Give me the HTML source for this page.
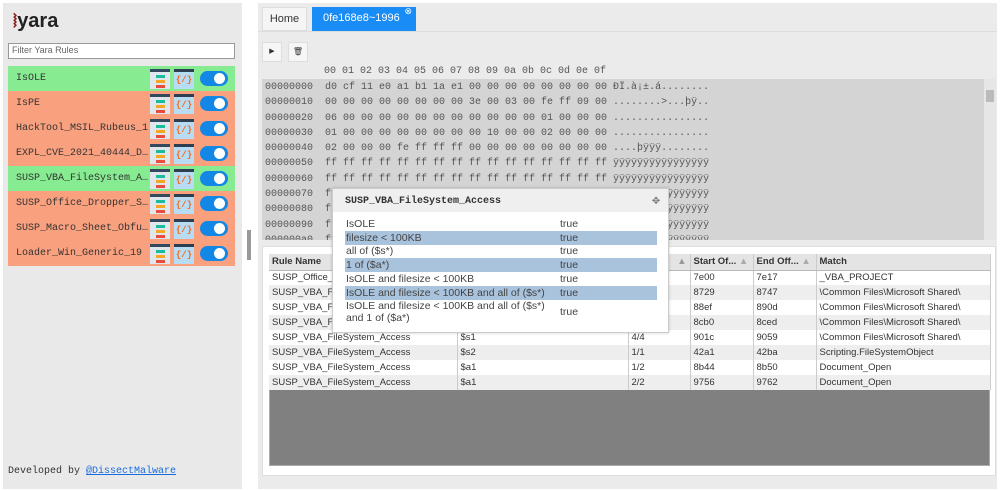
<!DOCTYPE html>
<html><head><meta charset="utf-8"><style>
*{box-sizing:border-box;margin:0;padding:0}
body{width:1000px;height:490px;background:#fff;font-family:"Liberation Sans",sans-serif;position:relative;overflow:hidden}
.abs{position:absolute}
#side{left:3px;top:3px;width:239px;height:486px;background:#e9e9e9}
.mono{font-family:"Liberation Mono",monospace}
.row{position:absolute;left:8px;width:227px;height:25px;font-size:10px;color:#333;line-height:25px;padding-left:8px}
.row span{display:block;width:134px;overflow:hidden;white-space:nowrap}
.g{background:#87eb91}.o{background:#f9a07f}
.i1{position:absolute;left:142px;top:3px;width:20px;height:20px;background:#dfe6ec;border-top:3px solid #34495e}
.i1 b{position:absolute;height:3px;left:6px}
.i2{position:absolute;left:166px;top:3px;width:20px;height:20px;background:#b9dcf5;border-top:3px solid #2c3e50;color:#f26b1d;font-size:9px;line-height:16px;text-align:center;font-weight:bold}
.tg{position:absolute;left:192px;top:5px;width:28px;height:15px;border-radius:8px;background:#1287e6}
.tg:after{content:"";position:absolute;right:3px;top:2px;width:11px;height:11px;border-radius:50%;background:#fff}
#right{left:258px;top:3px;width:739px;height:486px;background:#ebebeb}
pre{font-family:"Liberation Mono",monospace;font-size:10px;color:#555;line-height:15.3px}
table{border-collapse:collapse;font-size:9.5px;color:#333}
td,th{height:15px;padding:0 3px;border-right:1px solid #ccc;white-space:nowrap;overflow:hidden;text-align:left}
th{background:#e4e4e4;font-weight:bold;height:16px;border-bottom:1px solid #bbb}
.dt td{background:#fff}
.dt tr:nth-child(odd) td{background:#eee}
.pop td{border:none;background:none;font-size:10.5px;height:13.8px;color:#444;padding:0 1px}
.pop tr.h td{background:#a9c3dc}
</style></head><body>
<div id="side" class="abs"></div>
<div class="abs" style="left:13px;top:10px;font-weight:bold;font-size:20px;color:#222"><span style="color:#8b1c1c">⧘</span>yara</div>
<div class="abs" style="left:8px;top:43px;width:227px;height:16px;background:#fff;border:1px solid #999;font-size:9px;color:#666;padding:1px 3px">Filter Yara Rules</div>
<div class="row g mono" style="top:66px"><span>IsOLE</span></div>
<div class="row o mono" style="top:91px"><span>IsPE</span></div>
<div class="row o mono" style="top:116px"><span>HackTool_MSIL_Rubeus_1</span></div>
<div class="row o mono" style="top:141px"><span>EXPL_CVE_2021_40444_D…</span></div>
<div class="row g mono" style="top:166px"><span>SUSP_VBA_FileSystem_A…</span></div>
<div class="row o mono" style="top:191px"><span>SUSP_Office_Dropper_S…</span></div>
<div class="row o mono" style="top:216px"><span>SUSP_Macro_Sheet_Obfu…</span></div>
<div class="row o mono" style="top:241px"><span>Loader_Win_Generic_19</span></div>
<div class="abs mono" style="left:8px;top:466px;font-size:10px;color:#333">Developed by <span style="color:#1a6ddf;text-decoration:underline">@DissectMalware</span></div>
<div class="abs" style="left:247px;top:230px;width:4px;height:30px;background:#999"></div>

<div id="right" class="abs"></div>
<div class="abs" style="left:262px;top:7px;width:45px;height:24px;background:#f5f5f5;border:1px solid #ddd;font-size:11px;color:#333;text-align:center;line-height:22px">Home</div>
<div class="abs" style="left:312px;top:7px;width:104px;height:25px;background:#1a8cf5;font-size:11px;color:#fff;padding-left:11px;line-height:23px">0fe168e8~1996<span style="position:absolute;right:4px;top:-7px;font-size:9px">⊗</span></div>
<div class="abs" style="left:258px;top:31px;width:739px;height:1px;background:#ddd"></div>
<div class="abs" style="left:262px;top:42px;width:20px;height:20px;background:#f6f6f6;border:1px solid #ddd;font-size:7px;text-align:center;line-height:18px;color:#333">▶</div>
<div class="abs" style="left:288px;top:42px;width:20px;height:20px;background:#f6f6f6;border:1px solid #ddd;font-size:8px;text-align:center;line-height:18px;color:#333">🗑</div>
<pre class="abs" style="left:264px;top:64px">          00 01 02 03 04 05 06 07 08 09 0a 0b 0c 0d 0e 0f</pre>
<div class="abs" style="left:262px;top:79px;width:734px;height:161px;background:#d4d4d4"></div>
<div class="abs" style="left:984px;top:79px;width:12px;height:161px;background:#e6e6e6"></div>
<div class="abs" style="left:986px;top:90px;width:8px;height:12px;background:#bbb"></div>
<pre class="abs" style="left:265px;top:80px;height:160px;overflow:hidden">00000000  d0 cf 11 e0 a1 b1 1a e1 00 00 00 00 00 00 00 00 ÐÏ.à¡±.á........
00000010  00 00 00 00 00 00 00 00 3e 00 03 00 fe ff 09 00 ........&gt;...þÿ..
00000020  06 00 00 00 00 00 00 00 00 00 00 00 01 00 00 00 ................
00000030  01 00 00 00 00 00 00 00 00 10 00 00 02 00 00 00 ................
00000040  02 00 00 00 fe ff ff ff 00 00 00 00 00 00 00 00 ....þÿÿÿ........
00000050  ff ff ff ff ff ff ff ff ff ff ff ff ff ff ff ff ÿÿÿÿÿÿÿÿÿÿÿÿÿÿÿÿ
00000060  ff ff ff ff ff ff ff ff ff ff ff ff ff ff ff ff ÿÿÿÿÿÿÿÿÿÿÿÿÿÿÿÿ
00000070  ff ff ff ff ff ff ff ff ff ff ff ff ff ff ff ff ÿÿÿÿÿÿÿÿÿÿÿÿÿÿÿÿ
00000080  ff ff ff ff ff ff ff ff ff ff ff ff ff ff ff ff ÿÿÿÿÿÿÿÿÿÿÿÿÿÿÿÿ
00000090  ff ff ff ff ff ff ff ff ff ff ff ff ff ff ff ff ÿÿÿÿÿÿÿÿÿÿÿÿÿÿÿÿ
000000a0  ff ff ff ff ff ff ff ff ff ff ff ff ff ff ff ff ÿÿÿÿÿÿÿÿÿÿÿÿÿÿÿÿ</pre>
<div class="abs" style="left:262px;top:246px;width:734px;height:230px;background:#fff;border:1px solid #ddd"></div>
<div class="abs" style="left:269px;top:254px;width:721px;height:212px;background:#808080;border:1px solid #aaa"></div>
<table class="abs dt" style="left:269px;top:254px;width:721px;table-layout:fixed">
<colgroup><col style="width:188px"><col style="width:171px"><col style="width:62px"><col style="width:63px"><col style="width:63px"><col style="width:174px"></colgroup>
<tr><th>Rule Name</th><th></th><th style="text-align:right;color:#999">▲</th><th>Start Of... <span style="color:#aaa">▲</span></th><th>End Off... <span style="color:#aaa">▲</span></th><th>Match</th></tr>
<tr><td>SUSP_Office_Dropper</td><td></td><td></td><td>7e00</td><td>7e17</td><td>_VBA_PROJECT</td></tr>
<tr><td>SUSP_VBA_FileSystem</td><td></td><td></td><td>8729</td><td>8747</td><td>\Common Files\Microsoft Shared\</td></tr>
<tr><td>SUSP_VBA_FileSystem</td><td></td><td></td><td>88ef</td><td>890d</td><td>\Common Files\Microsoft Shared\</td></tr>
<tr><td>SUSP_VBA_FileSystem</td><td></td><td></td><td>8cb0</td><td>8ced</td><td>\Common Files\Microsoft Shared\</td></tr>
<tr><td>SUSP_VBA_FileSystem_Access</td><td>$s1</td><td>4/4</td><td>901c</td><td>9059</td><td>\Common Files\Microsoft Shared\</td></tr>
<tr><td>SUSP_VBA_FileSystem_Access</td><td>$s2</td><td>1/1</td><td>42a1</td><td>42ba</td><td>Scripting.FileSystemObject</td></tr>
<tr><td>SUSP_VBA_FileSystem_Access</td><td>$a1</td><td>1/2</td><td>8b44</td><td>8b50</td><td>Document_Open</td></tr>
<tr><td>SUSP_VBA_FileSystem_Access</td><td>$a1</td><td>2/2</td><td>9756</td><td>9762</td><td>Document_Open</td></tr>
</table>

<div class="abs pop" style="left:332px;top:188px;width:337px;height:145px;background:#fff;border:1px solid #ccc;box-shadow:0 0 3px rgba(0,0,0,.2)">
<div style="height:23px;background:#efefef;font-family:'Liberation Mono',monospace;font-weight:bold;font-size:10px;color:#333;padding:7px 0 0 12px">SUSP_VBA_FileSystem_Access<span style="position:absolute;right:8px;top:4px;font-size:13px;color:#777">✥</span></div>
<table style="margin:5px 0 0 12px;width:312px">
<colgroup><col style="width:214px"><col></colgroup>
<tr><td>IsOLE</td><td>true</td></tr>
<tr class="h"><td>filesize &lt; 100KB</td><td>true</td></tr>
<tr><td>all of ($s*)</td><td>true</td></tr>
<tr class="h"><td>1 of ($a*)</td><td>true</td></tr>
<tr><td>IsOLE and filesize &lt; 100KB</td><td>true</td></tr>
<tr class="h"><td>IsOLE and filesize &lt; 100KB and all of ($s*)</td><td>true</td></tr>
<tr><td style="white-space:normal;line-height:12px">IsOLE and filesize &lt; 100KB and all of ($s*) and 1 of ($a*)</td><td>true</td></tr>
</table></div>

<script>
document.querySelectorAll('.row').forEach(r=>{r.insertAdjacentHTML('beforeend','<div class="i1"><b style="top:3px;width:9px;background:#1abc9c"></b><b style="top:8px;width:9px;background:#f5a623"></b><b style="top:13px;width:9px;background:#e74c3c"></b></div><div class="i2">{/}</div><div class="tg"></div>')});
</script>
</body></html>
